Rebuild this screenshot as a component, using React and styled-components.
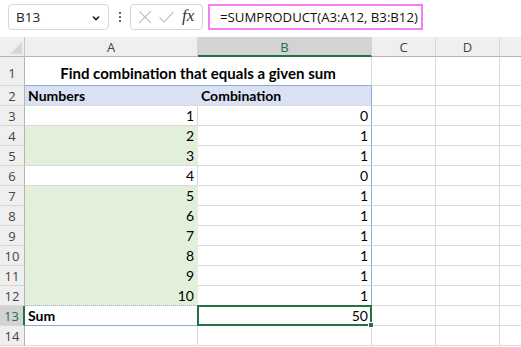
import React from 'react'
import styled, { createGlobalStyle } from 'styled-components'

const GlobalStyle = createGlobalStyle`
  html, body { margin: 0; padding: 0; background: #fff; }
  body { width: 521px; height: 347px; overflow: hidden; }
  * { box-sizing: border-box; }
`

const ROW_H = 20
const data = [
  [1, 0], [2, 1], [3, 1], [4, 0], [5, 1],
  [6, 1], [7, 1], [8, 1], [9, 1], [10, 1],
]

const App = () => {
  return (
    <Page>
      <GlobalStyle />
      <Toolbar>
        <NameBox>
          <span>B13</span>
          <svg width="10" height="10" viewBox="0 0 10 10">
            <path d="M2 3.5 L5 6.5 L8 3.5" fill="none" stroke="#222" strokeWidth="1.6" />
          </svg>
        </NameBox>
        <Dots>
          <i /><i /><i />
        </Dots>
        <FxBox>
          <svg width="16" height="16" viewBox="0 0 16 16">
            <path d="M2 2 L14 14 M14 2 L2 14" stroke="#c4c4c4" strokeWidth="1.2" fill="none" />
          </svg>
          <svg width="17" height="16" viewBox="0 0 17 16">
            <path d="M1.5 8.5 L6 13 L15.5 3" stroke="#c4c4c4" strokeWidth="1.2" fill="none" />
          </svg>
          <FxLabel>fx</FxLabel>
        </FxBox>
        <Formula>=SUMPRODUCT(A3:A12, B3:B12)</Formula>
      </Toolbar>

      <Sheet>
        <Corner>
          <svg width="12" height="12" viewBox="0 0 12 12">
            <path d="M12 0 L12 12 L0 12 Z" fill="#d6d6d6" />
          </svg>
        </Corner>
        <ColHead>A</ColHead>
        <ColHead $active>B</ColHead>
        <ColHead>C</ColHead>
        <ColHead>D</ColHead>
        <ColHead />

        <RowHead $tall>1</RowHead>
        <Title>Find combination that equals a given sum</Title>
        <Cell $tall />
        <Cell $tall />
        <Cell $tall />

        <RowHead>2</RowHead>
        <Cell $fill="#d9e1f2" $bold $noRight>Numbers</Cell>
        <Cell $fill="#d9e1f2" $bold $blueRight>Combination</Cell>
        <Cell />
        <Cell />
        <Cell />

        {data.map(([n, c], i) => {
          const row = i + 3
          const green = c === 1
          const nextGreen = i + 1 < data.length && data[i + 1][1] === 1
          const last = i === data.length - 1
          return (
            <React.Fragment key={row}>
              <RowHead>{row}</RowHead>
              <Cell
                $right
                $fill={green ? '#e2efda' : undefined}
                $noRight={green}
                $noBottom={green && nextGreen}
                $dotted={last}
              >
                {n}
              </Cell>
              <Cell $right $blueRight $noBottom={last}>{c}</Cell>
              <Cell />
              <Cell />
              <Cell />
            </React.Fragment>
          )
        })}

        <RowHead $active>13</RowHead>
        <Cell $bold $blueBottom>Sum</Cell>
        <Selected>
          50
          <Handle />
        </Selected>
        <Cell />
        <Cell />
        <Cell />

        <RowHead>14</RowHead>
        <Cell />
        <Cell />
        <Cell />
        <Cell />
        <Cell />
      </Sheet>
    </Page>
  )
}

export default App

const Page = styled.div`
  width: 521px;
  height: 347px;
  background: #fff;
  overflow: hidden;
`

const Toolbar = styled.div`
  height: 37px;
  display: flex;
  align-items: flex-start;
  padding: 4px 0 0 8px;
  background: #fff;
`

const NameBox = styled.div`
  width: 101px;
  height: 26px;
  border: 1px solid #d6d6d6;
  border-radius: 4px;
  display: flex;
  align-items: center;
  justify-content: space-between;
  padding: 0 7px 0 7px;
  font-family: "Open Sans", "Noto Sans", sans-serif;
  font-size: 13.5px;
  color: #222;
  svg { margin-top: 1px; }
`

const Dots = styled.div`
  width: 21px;
  height: 26px;
  display: flex;
  flex-direction: column;
  align-items: center;
  justify-content: center;
  gap: 2px;
  i {
    width: 2px;
    height: 2px;
    background: #333;
    border-radius: 50%;
  }
`

const FxBox = styled.div`
  width: 73px;
  height: 26px;
  border: 1px solid #d6d6d6;
  border-radius: 4px;
  display: flex;
  align-items: center;
  gap: 5px;
  padding-left: 6px;
`

const FxLabel = styled.span`
  font-family: "Liberation Serif", "DejaVu Serif", serif;
  font-style: italic;
  font-size: 17px;
  color: #333;
  margin-left: 2px;
  margin-top: -2px;
`

const Formula = styled.div`
  margin-left: 5px;
  width: 215px;
  height: 26px;
  border: 2px solid #f47ef4;
  display: flex;
  align-items: center;
  padding-left: 10px;
  font-family: "Open Sans", "Noto Sans", sans-serif;
  font-size: 13.2px;
  color: #111;
  white-space: nowrap;
`

const Sheet = styled.div`
  display: grid;
  grid-template-columns: 25px 173px 174px 64px 64px 40px;
  grid-template-rows: 20px 29px repeat(13, ${ROW_H}px);
  font-family: "Lato", "Liberation Sans", sans-serif;
  font-size: 14px;
  color: #000;
`

const Corner = styled.div`
  background: #efefef;
  border-right: 1px solid #c8c8c8;
  border-bottom: 1px solid #b4b4b4;
  display: flex;
  align-items: flex-end;
  justify-content: flex-end;
  padding: 0 2px 2px 0;
`

const ColHead = styled.div`
  background: ${p => (p.$active ? '#d3d3d3' : '#efefef')};
  border-right: 1px solid #d6d6d6;
  border-bottom: ${p => (p.$active ? '2px solid #217346' : '1px solid #b4b4b4')};
  color: ${p => (p.$active ? '#217346' : '#444')};
  font-family: "Open Sans", "Noto Sans", sans-serif;
  font-size: 13px;
  display: flex;
  align-items: center;
  justify-content: center;
  padding-top: ${p => (p.$active ? '1px' : '0')};
`

const RowHead = styled.div`
  background: ${p => (p.$active ? '#d3d3d3' : '#efefef')};
  border-right: ${p => (p.$active ? '2px solid #217346' : '1px solid #b4b4b4')};
  border-bottom: 1px solid #d6d6d6;
  color: ${p => (p.$active ? '#217346' : '#444')};
  font-family: "Open Sans", "Noto Sans", sans-serif;
  font-size: 13px;
  display: flex;
  align-items: ${p => (p.$tall ? 'flex-end' : 'center')};
  justify-content: center;
  padding-bottom: ${p => (p.$tall ? '3px' : '0')};
`

const Cell = styled.div`
  background: ${p => p.$fill || '#fff'};
  border-right: ${p =>
    p.$blueRight ? '1px solid #8ea9db' : p.$noRight ? `1px solid ${p.$fill}` : '1px solid #dadada'};
  border-bottom: ${p =>
    p.$dotted
      ? '1px dotted #8ea9db'
      : p.$blueBottom
      ? '1px solid #8ea9db'
      : p.$noBottom
      ? `1px solid ${p.$fill || '#fff'}`
      : '1px solid #dadada'};
  font-weight: ${p => (p.$bold ? 700 : 400)};
  display: flex;
  align-items: flex-end;
  justify-content: ${p => (p.$right ? 'flex-end' : 'flex-start')};
  padding: 0 3px 1px 3px;
  white-space: nowrap;
  line-height: 17px;
`

const Title = styled.div`
  grid-column: span 2;
  border-right: 1px solid #dadada;
  border-bottom: 1px solid #8ea9db;
  font-weight: 700;
  font-size: 15px;
  display: flex;
  align-items: flex-end;
  justify-content: center;
  padding-bottom: 3px;
  white-space: nowrap;
`

const Selected = styled.div`
  position: relative;
  margin: -1px 0 0 -1px;
  border: 2px solid #217346;
  display: flex;
  align-items: flex-end;
  justify-content: flex-end;
  padding: 0 2px 0 3px;
  line-height: 17px;
  background: #fff;
`

const Handle = styled.span`
  position: absolute;
  right: -4px;
  bottom: -4px;
  width: 6px;
  height: 6px;
  background: #217346;
  border: 1px solid #fff;
`
